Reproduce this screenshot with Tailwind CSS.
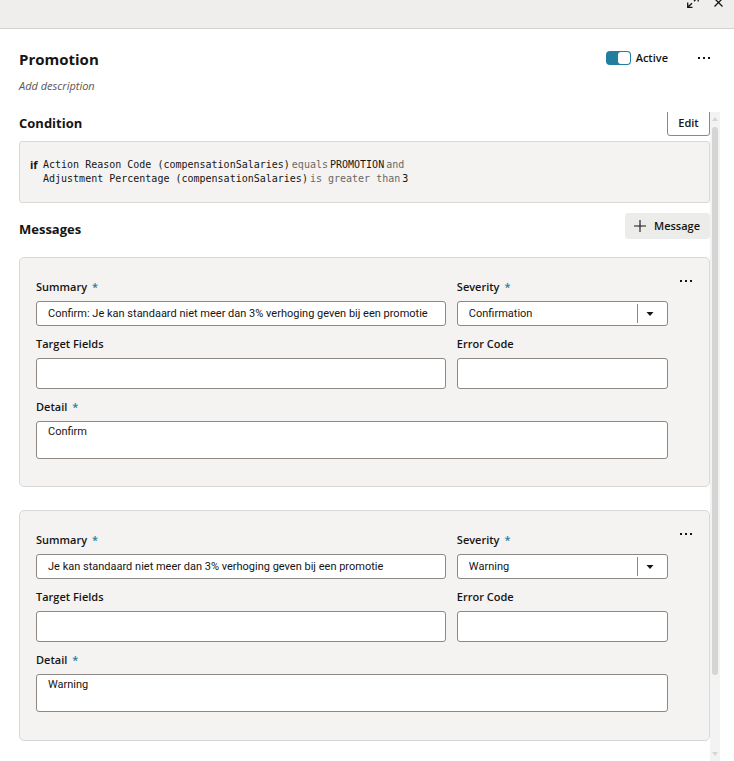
<!DOCTYPE html>
<html lang="en">
<head>
    <meta charset="UTF-8">
    <meta name="viewport" content="width=device-width, initial-scale=1.0">
    <title>Promotion</title>
    <script src="https://cdn.jsdelivr.net/npm/@tailwindcss/browser@4"></script>
</head>
<body class="flex h-screen flex-col overflow-hidden bg-white font-['Open_Sans','Noto_Sans',sans-serif] text-[11px] leading-4 text-[#161513]">

    <!-- Drawer bar -->
    <header class="flex h-[29px] shrink-0 items-start justify-end gap-[15px] border-b border-[#d4d3cf] bg-[#efeeed] pr-[11px]">
        <button type="button" aria-label="Expand" class="-mt-1">
            <svg class="size-3" viewBox="0 0 12 12" fill="none" stroke="currentColor" stroke-width="1.3"><path d="M.7 6.5V11.4H5.5M1 11 5 7.2M7 5.2 11 1.2M6.5 1H11.2V5.5"/></svg>
        </button>
        <button type="button" aria-label="Close" class="-mt-0.5">
            <svg class="size-[9px]" viewBox="0 0 9 9" fill="none" stroke="currentColor" stroke-width="1.3"><path d="M.5.5 8.5 8.5M8.5.5.5 8.5"/></svg>
        </button>
    </header>

    <!-- Title -->
    <div class="flex shrink-0 items-center justify-between pt-[18px] pr-6 pl-[19px]">
        <h1 class="text-[15px] leading-6 font-bold">Promotion</h1>
        <div class="flex items-center pb-0.5">
            <label class="flex items-center gap-[5px] font-semibold">
                <input type="checkbox" role="switch" checked class="peer sr-only">
                <span class="flex h-[14px] w-[25px] justify-end rounded-[4px] bg-[#227e9e] p-px"><span class="w-3 rounded-[3px] bg-white"></span></span>
                Active
            </label>
            <button type="button" aria-label="More actions" class="ml-[30px]">
                <svg class="h-1 w-3" viewBox="0 0 12 4" fill="currentColor"><path d="M0 1H2V3H0ZM5 1H7V3H5ZM10 1H12V3H10Z"/></svg>
            </button>
        </div>
    </div>
    <p class="shrink-0 pt-[7px] pl-[19px] text-[#5b5652] italic">Add description</p>

    <div class="mt-[18px] mr-[14px] flex min-h-0 flex-1">
        <main class="min-w-0 flex-1 overflow-hidden pl-[19px]">
            <div class="flex items-start justify-between">
                <h2 class="text-[13px] leading-[22px] font-bold">Condition</h2>
                <button type="button" class="-mt-1 h-7 w-[43px] rounded-[3px] border border-[#8b8885] pt-0.5 font-semibold">Edit</button>
            </div>

            <div class="mt-[5px] h-[62px] rounded-[3px] border border-[#d9d8d6] bg-[#f4f3f2] px-[10px] py-4 font-['DejaVu_Sans_Mono',monospace] text-[10px] leading-[14px]">
                <div class="flex">
                    <span class="w-[13px] font-['Open_Sans',sans-serif] text-[11px] font-bold">if</span>
                    <div>
                        <p class="flex gap-[2px]"><span>Action Reason Code (compensationSalaries)</span><span class="text-[#6b6864]">equals</span><span>PROMOTION</span><span class="text-[#6b6864]">and</span></p>
                        <p class="flex gap-[2px]"><span>Adjustment Percentage (compensationSalaries)</span><span class="text-[#6b6864]">is greater than</span><span>3</span></p>
                    </div>
                </div>
            </div>

            <div class="mt-[10px] flex items-start justify-between">
                <h2 class="pt-[5px] text-[13px] leading-[22px] font-bold">Messages</h2>
                <button type="button" class="flex h-[26px] items-center gap-2 rounded-[3px] bg-[#ececea] pr-[10px] pl-[9px] font-semibold">
                    <svg class="size-3" viewBox="0 0 12 12" fill="none" stroke="currentColor" stroke-width="1.1"><path d="M6 0V12M0 6H12"/></svg>
                    Message
                </button>
            </div>

            <!-- Confirmation message -->
            <section class="mt-[17px] flex h-[230px] items-start rounded-[5px] border border-[#d9d8d6] bg-[#f4f3f2] pt-[21px] pl-4">
                <div class="grid flex-1 grid-cols-[33fr_17fr] gap-x-[11px]">
                    <div>
                        <label for="summary1" class="block font-semibold">Summary <span class="ml-0.5 text-[#227e9e]">*</span></label>
                        <input id="summary1" type="text" value="Confirm: Je kan standaard niet meer dan 3% verhoging geven bij een promotie" class="mt-[6px] block h-[25px] w-full rounded-[3px] border border-[#8b8885] bg-white px-[11px] font-['Roboto',sans-serif]">
                    </div>
                    <div>
                        <label for="severity1" class="block font-semibold">Severity <span class="ml-0.5 text-[#227e9e]">*</span></label>
                        <div class="relative mt-[6px]">
                            <select id="severity1" class="block h-[25px] w-full appearance-none rounded-[3px] border border-[#8b8885] bg-white pr-8 pl-[11px] font-['Roboto',sans-serif]">
                                <option>Confirmation</option>
                                <option>Warning</option>
                            </select>
                            <span class="pointer-events-none absolute inset-y-[3px] right-0 flex w-[31px] items-center border-l border-[#8b8885] pl-2">
                                <svg class="h-1 w-2" viewBox="0 0 8 4" fill="currentColor"><path d="M.5 0H7.5L4 4Z"/></svg>
                            </span>
                        </div>
                    </div>
                    <div class="mt-[10px]">
                        <label for="target1" class="block font-semibold">Target Fields</label>
                        <input id="target1" type="text" class="mt-[6px] block h-[31px] w-full rounded-[3px] border border-[#8b8885] bg-white px-[11px] font-['Roboto',sans-serif]">
                    </div>
                    <div class="mt-[10px]">
                        <label for="error1" class="block font-semibold">Error Code</label>
                        <input id="error1" type="text" class="mt-[6px] block h-[31px] w-full rounded-[3px] border border-[#8b8885] bg-white px-[11px] font-['Roboto',sans-serif]">
                    </div>
                    <div class="col-span-2 mt-[10px]">
                        <label for="detail1" class="block font-semibold">Detail <span class="ml-0.5 text-[#227e9e]">*</span></label>
                        <textarea id="detail1" class="mt-[6px] block h-[38px] w-full resize-none rounded-[3px] border border-[#8b8885] bg-white px-[11px] py-[2px] font-['Roboto',sans-serif]">Confirm</textarea>
                    </div>
                </div>
                <button type="button" aria-label="Message actions" class="mr-[17px] ml-3">
                    <svg class="h-1 w-3" viewBox="0 0 12 4" fill="currentColor"><path d="M0 1H2V3H0ZM5 1H7V3H5ZM10 1H12V3H10Z"/></svg>
                </button>
            </section>

            <!-- Warning message -->
            <section class="mt-[23px] flex h-[231px] items-start rounded-[5px] border border-[#d9d8d6] bg-[#f4f3f2] pt-[21px] pl-4">
                <div class="grid flex-1 grid-cols-[33fr_17fr] gap-x-[11px]">
                    <div>
                        <label for="summary2" class="block font-semibold">Summary <span class="ml-0.5 text-[#227e9e]">*</span></label>
                        <input id="summary2" type="text" value="Je kan standaard niet meer dan 3% verhoging geven bij een promotie" class="mt-[6px] block h-[25px] w-full rounded-[3px] border border-[#8b8885] bg-white px-[11px] font-['Roboto',sans-serif]">
                    </div>
                    <div>
                        <label for="severity2" class="block font-semibold">Severity <span class="ml-0.5 text-[#227e9e]">*</span></label>
                        <div class="relative mt-[6px]">
                            <select id="severity2" class="block h-[25px] w-full appearance-none rounded-[3px] border border-[#8b8885] bg-white pr-8 pl-[11px] font-['Roboto',sans-serif]">
                                <option>Warning</option>
                                <option>Confirmation</option>
                            </select>
                            <span class="pointer-events-none absolute inset-y-[3px] right-0 flex w-[31px] items-center border-l border-[#8b8885] pl-2">
                                <svg class="h-1 w-2" viewBox="0 0 8 4" fill="currentColor"><path d="M.5 0H7.5L4 4Z"/></svg>
                            </span>
                        </div>
                    </div>
                    <div class="mt-[10px]">
                        <label for="target2" class="block font-semibold">Target Fields</label>
                        <input id="target2" type="text" class="mt-[6px] block h-[31px] w-full rounded-[3px] border border-[#8b8885] bg-white px-[11px] font-['Roboto',sans-serif]">
                    </div>
                    <div class="mt-[10px]">
                        <label for="error2" class="block font-semibold">Error Code</label>
                        <input id="error2" type="text" class="mt-[6px] block h-[31px] w-full rounded-[3px] border border-[#8b8885] bg-white px-[11px] font-['Roboto',sans-serif]">
                    </div>
                    <div class="col-span-2 mt-[10px]">
                        <label for="detail2" class="block font-semibold">Detail <span class="ml-0.5 text-[#227e9e]">*</span></label>
                        <textarea id="detail2" class="mt-[6px] block h-[38px] w-full resize-none rounded-[3px] border border-[#8b8885] bg-white px-[11px] py-[2px] font-['Roboto',sans-serif]">Warning</textarea>
                    </div>
                </div>
                <button type="button" aria-label="Message actions" class="mr-[17px] ml-3">
                    <svg class="h-1 w-3" viewBox="0 0 12 4" fill="currentColor"><path d="M0 1H2V3H0ZM5 1H7V3H5ZM10 1H12V3H10Z"/></svg>
                </button>
            </section>
        </main>

        <!-- Scrollbar -->
        <div class="flex w-[10px] shrink-0 flex-col items-center bg-[#f4f3f3] py-[5px] text-[#d5d5d4]" aria-hidden="true">
            <svg class="h-1 w-[6px]" viewBox="0 0 6 4" fill="currentColor"><path d="M0 4 3 0 6 4Z"/></svg>
            <div class="my-[6px] flex min-h-0 w-[6px] flex-1 flex-col">
                <div class="h-[88.5%] rounded-full bg-[#d5d5d4]"></div>
            </div>
            <svg class="h-1 w-[6px]" viewBox="0 0 6 4" fill="currentColor"><path d="M0 0H6L3 4Z"/></svg>
        </div>
    </div>
</body>
</html>
